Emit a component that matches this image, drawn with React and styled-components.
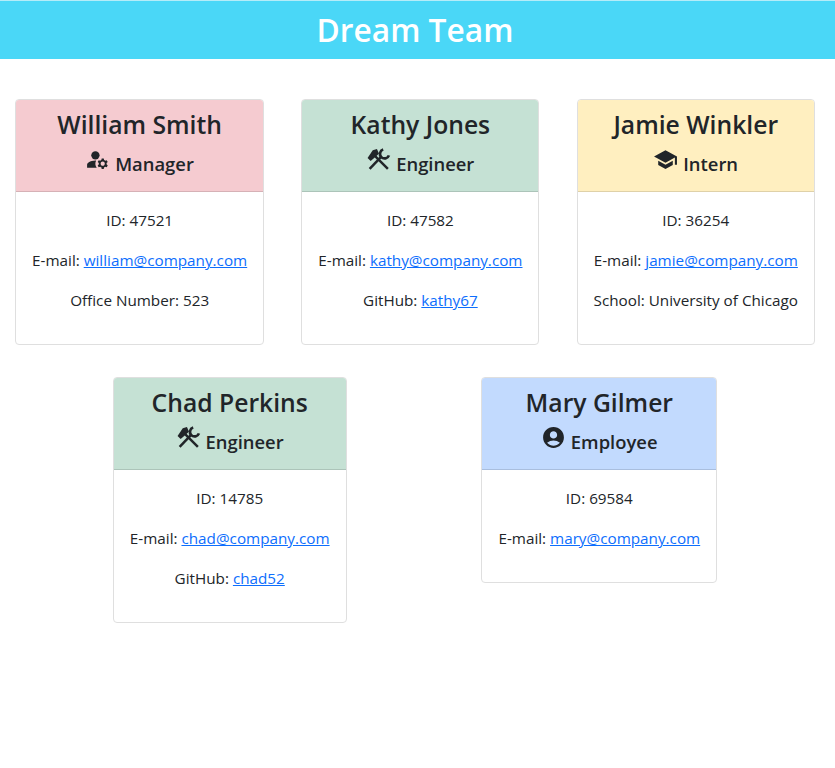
import React from 'react';
import styled, { createGlobalStyle } from 'styled-components';
import { MdManageAccounts, MdSchool, MdAccountCircle } from 'react-icons/md';

const GlobalStyle = createGlobalStyle`
    body {
        margin: 0;
        background: #fff;
        color: #212529;
        font-family: "Open Sans", "Noto Sans", sans-serif;
        font-size: 15.25px;
        line-height: 24px;
        overflow-x: hidden;
    }
`;

const Banner = styled.header`
    height: 58px;
    padding-right: 5px;
    border-top: 1px solid #b5ecf8;
    background: #4ad7f7;
    display: flex;
    align-items: center;
    justify-content: center;
`;

const Title = styled.h1`
    margin: 0;
    color: #fff;
    font-size: 31.7px;
    font-weight: 600;
    line-height: 58px;
`;

const CardGrid = styled.main`
    margin: 40px -17px 0 -22px;
    display: flex;
    flex-wrap: wrap;
    align-items: flex-start;
    justify-content: space-evenly;
    row-gap: 32px;
`;

const Card = styled.section`
    border: 1px solid #dfdfdf;
    border-radius: 4px;
    overflow: hidden;
    text-align: center;
`;

const CardHeader = styled.div`
    height: 92px;
    box-sizing: border-box;
    padding: 8px 16px;
    background: ${(p) => p.$tint};
    border-bottom: 1px solid rgba(0, 0, 0, 0.125);
`;

const Name = styled.h2`
    margin: 0;
    font-size: 24.7px;
    font-weight: 600;
    line-height: 34px;
`;

const Role = styled.h3`
    margin: 0;
    font-size: 18.4px;
    font-weight: 600;
    line-height: 44px;
    white-space: nowrap;
    svg {
        vertical-align: -1px;
    }
`;

const CardBody = styled.div`
    padding: 16px;
`;

const Line = styled.p`
    margin: 0 0 16px;
    white-space: nowrap;
`;

const MailLink = styled.a`
    color: #0d6efd;
`;

// hammer crossed with an open wrench
const ToolsIcon = () => (
    <svg width="25" height="25" viewBox="0 0 24 24" fill="none" stroke="currentColor">
        <path d="M1.5 10.5L4.5 13.5L12.5 6.5L10.5 2L6.5 3Z" fill="currentColor" stroke="none" />
        <path d="M8.5 8.5L21 21" strokeWidth="2.4" />
        <path d="M16.5 2.4A4.4 4.4 0 1 0 22 8" strokeWidth="2.6" />
        <path d="M14.5 9.5L3.5 21" strokeWidth="2.4" />
    </svg>
);

const icons = {
    Manager: <MdManageAccounts size={25} />,
    Engineer: <ToolsIcon />,
    Intern: <MdSchool size={25} />,
    Employee: <MdAccountCircle size={25} />,
};

const team = [
    { name: 'William Smith', role: 'Manager', tint: '#f5cbd0', id: 47521, email: 'william@company.com', extra: 'Office Number: 523' },
    { name: 'Kathy Jones', role: 'Engineer', tint: '#c5e1d4', id: 47582, email: 'kathy@company.com', label: 'GitHub', link: 'kathy67' },
    { name: 'Jamie Winkler', role: 'Intern', tint: '#ffefc0', id: 36254, email: 'jamie@company.com', extra: 'School: University of Chicago' },
    { name: 'Chad Perkins', role: 'Engineer', tint: '#c5e1d4', id: 14785, email: 'chad@company.com', label: 'GitHub', link: 'chad52' },
    { name: 'Mary Gilmer', role: 'Employee', tint: '#c2dafe', id: 69584, email: 'mary@company.com' },
];

function App() {
    return (
        <>
            <GlobalStyle />
            <Banner>
                <Title>Dream Team</Title>
            </Banner>
            <CardGrid>
                {team.map((m) => (
                    <Card key={m.id}>
                        <CardHeader $tint={m.tint}>
                            <Name>{m.name}</Name>
                            <Role>{icons[m.role]} {m.role}</Role>
                        </CardHeader>
                        <CardBody>
                            <Line>ID: {m.id}</Line>
                            <Line>E-mail: <MailLink href="#">{m.email}</MailLink></Line>
                            {m.extra && <Line>{m.extra}</Line>}
                            {m.link && <Line>{m.label}: <MailLink href="#">{m.link}</MailLink></Line>}
                        </CardBody>
                    </Card>
                ))}
            </CardGrid>
        </>
    );
}

export default App;
